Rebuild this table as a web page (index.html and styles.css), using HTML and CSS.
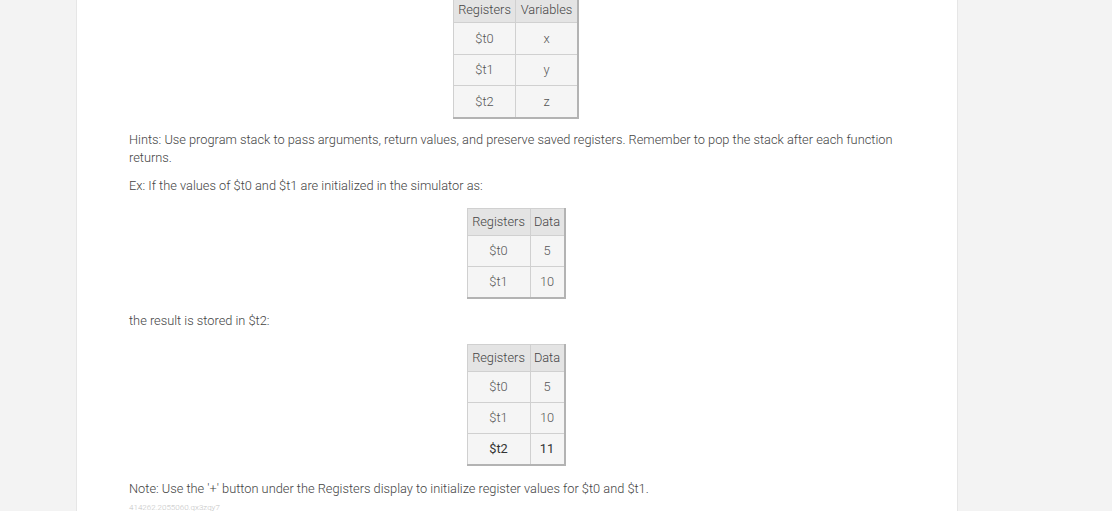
FILE: index.html
```html
<!DOCTYPE html>
<html>
<head>
<meta charset="utf-8">
<link rel="stylesheet" href="styles.css">
</head>
<body>
<div class="card">
  <table class="grid t1">
    <tr><th>Registers</th><th>Variables</th></tr>
    <tr><td>$t0</td><td>x</td></tr>
    <tr><td>$t1</td><td>y</td></tr>
    <tr><td>$t2</td><td>z</td></tr>
  </table>
  <p class="p-hints">Hints: Use program stack to pass arguments, return values, and preserve saved registers. Remember to pop the stack after each function returns.</p>
  <p class="p-ex">Ex: If the values of $t0 and $t1 are initialized in the simulator as:</p>
  <table class="grid t2">
    <tr><th>Registers</th><th>Data</th></tr>
    <tr><td>$t0</td><td>5</td></tr>
    <tr><td>$t1</td><td>10</td></tr>
  </table>
  <p class="p-result">the result is stored in $t2:</p>
  <table class="grid t3">
    <tr><th>Registers</th><th>Data</th></tr>
    <tr><td>$t0</td><td>5</td></tr>
    <tr><td>$t1</td><td>10</td></tr>
    <tr><td class="dark">$t2</td><td class="dark">11</td></tr>
  </table>
  <p class="p-note">Note: Use the '+' button under the Registers display to initialize register values for $t0 and $t1.</p>
  <div class="code-id">414262.2055060.qx3zqy7</div>
</div>
</body>
</html>
```

FILE: styles.css
```css
html, body {
  margin: 0;
  padding: 0;
}
body {
  background: #f3f3f3;
  font-family: Roboto, "Noto Sans", sans-serif;
  font-weight: 300;
  font-size: 12.8px;
  color: #444;
  height: 511px;
  overflow: hidden;
}
.card {
  margin-left: 76px;
  width: 882px;
  background: #fff;
  border-left: 1px solid #e6e6e6;
  border-right: 1px solid #e6e6e6;
  padding: 0 54px 0 52px;
  box-sizing: border-box;
  min-height: 520px;
  margin-top: -5px;
}
.grid {
  border-collapse: collapse;
  margin: 0 auto;
  border-left: 1px solid #c4c4c4;
  border-top: 1px solid #c4c4c4;
  border-right: 2px solid #b3b3b3;
  border-bottom: 2px solid #b3b3b3;
  color: #555;
}
.grid th {
  background: #e4e4e4;
  font-weight: 300;
  color: #444;
  height: 26px;
  padding: 0 3px;
  border: 1px solid #d0d0d0;
  text-align: center;
  white-space: nowrap;
}
.grid td {
  background: #f5f5f5;
  height: 30px;
  padding: 0 3px;
  border: 1px solid #d0d0d0;
  text-align: center;
}
.grid td.dark {
  color: #333;
  font-weight: 400;
}
.t1 th, .t1 td {
  width: 55px;
}
.t1 td { height: 30.5px; }
.t2 th:first-child, .t2 td:first-child,
.t3 th:first-child, .t3 td:first-child {
  width: 56px;
}
.t2 th:last-child, .t2 td:last-child,
.t3 th:last-child, .t3 td:last-child {
  width: 27px;
}
p {
  margin: 0;
  line-height: 18px;
}
.p-hints { margin-top: 12px; }
.p-ex { margin-top: 10px; margin-bottom: 13px; }
.p-result { margin-top: 13px; margin-bottom: 14px; }
.p-note { margin-top: 14px; }
.code-id {
  font-size: 8px;
  color: #c4c4c4;
  margin-top: 5px;
}
```
